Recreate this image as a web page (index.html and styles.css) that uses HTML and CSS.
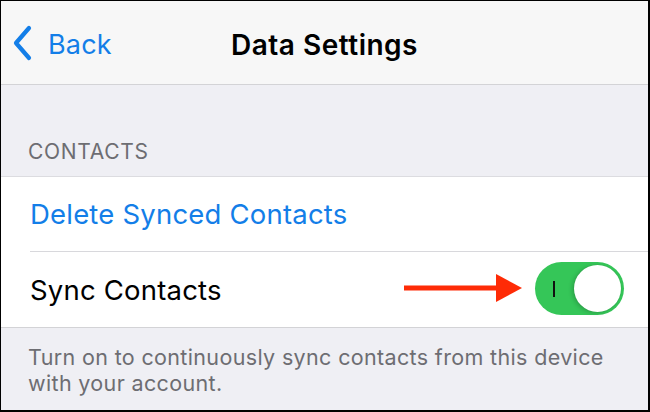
FILE: index.html
```html
<!DOCTYPE html>
<html lang="en">
<head>
<meta charset="utf-8">
<title>Data Settings</title>
<link rel="stylesheet" href="styles.css">
</head>
<body>
<div class="frame">
  <header class="nav">
    <a class="back" href="#">
      <svg class="chev" width="20" height="36" viewBox="0 0 20 36" aria-hidden="true">
        <path d="M16 3 L3 18 L16 33" fill="none" stroke="currentColor" stroke-width="4.2" stroke-linecap="round" stroke-linejoin="round"/>
      </svg>
      <span>Back</span>
    </a>
    <h1 class="title">Data Settings</h1>
    <span class="nav-spacer"></span>
  </header>

  <section class="section">
    <div class="section-header">CONTACTS</div>
    <div class="group">
      <div class="row row-action">Delete Synced Contacts</div>
      <div class="row row-toggle">
        <span class="row-label">Sync Contacts</span>
        <svg class="arrow" width="118" height="30" viewBox="0 0 118 30" aria-hidden="true">
          <rect x="0" y="12.5" width="94" height="5" fill="#fe2b06"/>
          <polygon points="92,1 118,15 92,29" fill="#fe2b06"/>
        </svg>
        <span class="toggle on"><span class="toggle-i"></span><span class="knob"></span></span>
      </div>
    </div>
    <p class="section-footer">Turn on to continuously sync contacts from this device with your account.</p>
  </section>
</div>
</body>
</html>
```

FILE: styles.css
```css
* { box-sizing: border-box; }
html, body { margin: 0; padding: 0; }
body {
  font-family: Inter, "Liberation Sans", Arial, sans-serif;
  background: #000;
}
.frame {
  width: 650px;
  height: 412px;
  border-style: solid;
  border-color: #000;
  border-width: 1px 2px 2px 1px;
  background: #efeff4;
  overflow: hidden;
  display: flex;
  flex-direction: column;
}
.nav {
  height: 84px;
  flex: none;
  background: #f7f7f7;
  border-bottom: 1px solid #d3d3d6;
  display: grid;
  grid-template-columns: 1fr auto 1fr;
  align-items: center;
  padding: 0;
}
.back {
  justify-self: start;
  display: flex;
  align-items: center;
  gap: 15px;
  color: #137ee8;
  text-decoration: none;
  font-size: 27px;
  letter-spacing: 0.2px;
  margin: 4px 0 0 12px;
}
.chev { display: block; margin-top: -3px; }
.title {
  margin: 5px 0 0;
  font-size: 28px;
  font-weight: 600;
  color: #000;
  letter-spacing: 0.5px;
}
.section { display: flex; flex-direction: column; }
.section-header {
  font-size: 21px;
  color: #6d6d72;
  padding: 55px 0 0 27px;
  height: 91px;
  letter-spacing: 0.7px;
  line-height: 24px;
}
.group {
  background: #fff;
  border-top: 1px solid #dcdce0;
  border-bottom: 1px solid #d3d3d6;
}
.row {
  height: 75px;
  display: flex;
  align-items: center;
  margin-left: 29px;
  font-size: 27.5px;
  letter-spacing: 0.2px;
}
.row-action {
  color: #137ee8;
  border-bottom: 1px solid #d8d8dc;
}
.row-toggle {
  color: #000;
  padding-right: 24px;
}
.row-label { flex: 1; }
.arrow { display: block; margin-right: 13px; margin-top: -3px; }
.toggle {
  position: relative;
  width: 89px;
  height: 53px;
  border-radius: 27px;
  background: #35c658;
  flex: none;
  margin-top: -2px;
}
.toggle-i {
  position: absolute;
  left: 18px;
  top: 19px;
  width: 2px;
  height: 16px;
  background: #111;
}
.knob {
  position: absolute;
  right: 3px;
  top: 3px;
  width: 47px;
  height: 47px;
  border-radius: 50%;
  background: #fff;
  box-shadow: -2px 1px 4px rgba(0,0,0,0.18), 0 0 0 0.5px rgba(0,0,0,0.06);
}
.section-footer {
  margin: 0;
  padding: 16px 24px 0 27px;
  font-size: 21.5px;
  line-height: 26px;
  color: #6d6d72;
  letter-spacing: 0.35px;
}
```
